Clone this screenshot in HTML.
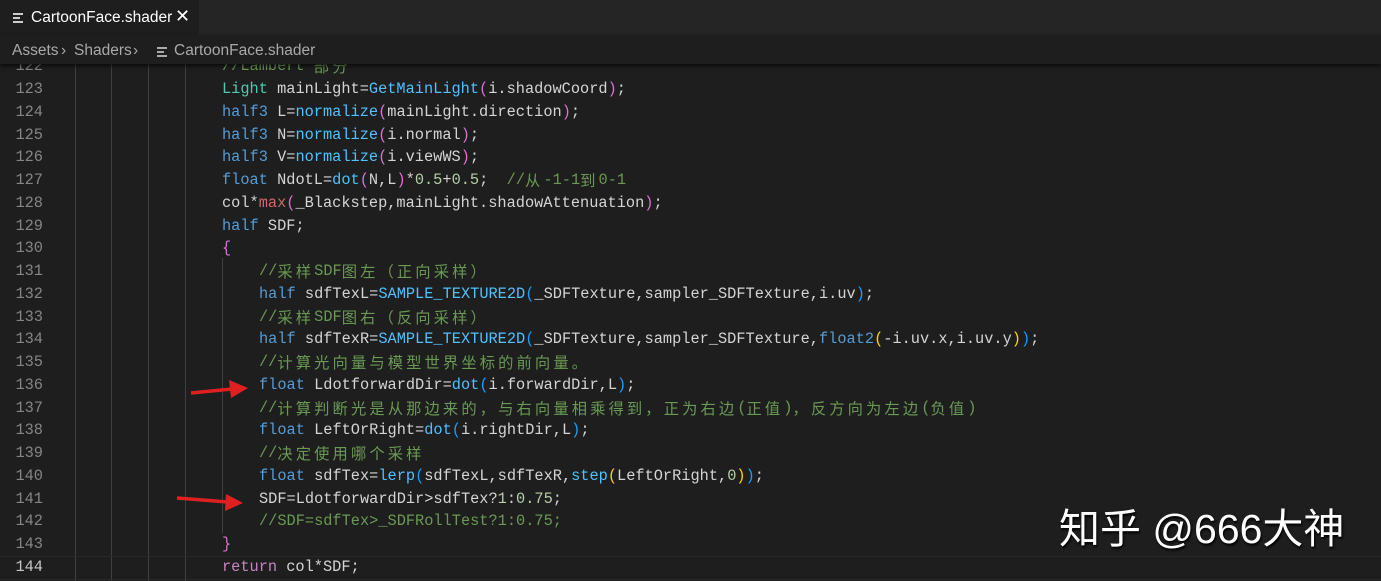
<!DOCTYPE html>
<html><head><meta charset="utf-8"><style>
body{margin:0;width:1381px;height:581px;background:#1e1e1e;overflow:hidden;position:relative;font-family:"Liberation Mono","Noto Sans CJK SC",monospace;}
.tabbar{position:absolute;left:0;top:0;width:1381px;height:35px;background:#252526;}
.tab{position:absolute;left:0;top:0;width:199px;height:35px;background:#1e1e1e;color:#fff;font:15.5px "Liberation Sans",sans-serif;}
.tab span{position:absolute;top:9px}
.bc{position:absolute;left:0;top:35px;width:1381px;height:29px;background:#1e1e1e;color:#a9a9a9;font:15.5px "Liberation Sans",sans-serif;box-shadow:0 2px 4px rgba(0,0,0,.7);z-index:3}
.bc span{position:absolute;top:7px}
.ico{position:absolute;width:10px;height:10px;}
.ico i{display:block;height:2px;background:currentColor;margin-bottom:2px}
.ln{position:absolute;left:0;width:43px;text-align:right;color:#858585;font-size:15.3px;line-height:22px;height:22px}
.cd{position:absolute;white-space:pre;color:#d4d4d4;font-size:15.3px;line-height:22px;height:22px}
.g{position:absolute;top:55px;height:526px;width:1px;background:#404040}
.c{color:#6a9955}.k{color:#569cd6}.t{color:#4ec9b0}.f{color:#4fc1ff}.n{color:#b5cea8}.p{color:#c586c0}.m{color:#d16969}.y{color:#ffd700}.pk{color:#da70d6}.b{color:#179fff}
.z{letter-spacing:3.1px;font-family:"Noto Sans CJK SC",sans-serif;font-size:15.3px;line-height:22px;display:inline-block;height:22px;vertical-align:top}
.wm{position:absolute;left:1059px;top:495px;color:#fff;font:41px "Liberation Sans","Noto Sans CJK SC",sans-serif;text-shadow:1px 2px 2px #000;z-index:5}
</style></head><body>
<div class="tabbar"><div class="tab"><div class="ico" style="left:13px;top:13px;color:#ccc"><i></i><i style="width:7px"></i><i></i></div><span style="left:31px">CartoonFace.shader</span><span style="left:175px;font-size:18px;top:6px">✕</span></div></div>
<div class="bc"><span style="left:12px">Assets</span><span style="left:61px">›</span><span style="left:74px">Shaders</span><span style="left:133px">›</span><div class="ico" style="left:157px;top:12px;color:#aaa"><i></i><i style="width:7px"></i><i></i></div><span style="left:174px">CartoonFace.shader</span></div>
<div class="g" style="left:75px"></div><div class="g" style="left:111px"></div><div class="g" style="left:148px"></div><div class="g" style="left:185px"></div>
<div class="g" style="left:222px;top:258px;height:275px"></div>
<div style="position:absolute;left:0;top:556px;width:1381px;height:22px;border-top:1px solid #282828;border-bottom:1px solid #282828"></div>
<div id="code"></div>
<div class="wm">知乎 @666大神</div>
<svg style="position:absolute;left:0;top:0;z-index:4" width="300" height="581">
<path d="M191 393 L232 389" stroke="#e02020" stroke-width="3.5"/><path d="M248 388 L229 380 L231 398 Z" fill="#e02020"/>
<path d="M177 498 L228 502" stroke="#e02020" stroke-width="3.5"/><path d="M243 503 L226 494 L225 511 Z" fill="#e02020"/>
</svg>
<script>
var L=[
[122,222,'<span class="c">//Lambert <span class="z">部分</span></span>'],
[123,222,'<span class="t">Light</span> mainLight=<span class="f">GetMainLight</span><span class="pk">(</span>i.shadowCoord<span class="pk">)</span>;'],
[124,222,'<span class="k">half3</span> L=<span class="f">normalize</span><span class="pk">(</span>mainLight.direction<span class="pk">)</span>;'],
[125,222,'<span class="k">half3</span> N=<span class="f">normalize</span><span class="pk">(</span>i.normal<span class="pk">)</span>;'],
[126,222,'<span class="k">half3</span> V=<span class="f">normalize</span><span class="pk">(</span>i.viewWS<span class="pk">)</span>;'],
[127,222,'<span class="k">float</span> NdotL=<span class="f">dot</span><span class="pk">(</span>N,L<span class="pk">)</span>*<span class="n">0.5</span>+<span class="n">0.5</span>;  <span class="c">//<span class="z">从</span>-1-1<span class="z">到</span>0-1</span>'],
[128,222,'col*<span class="m">max</span><span class="pk">(</span>_Blackstep,mainLight.shadowAttenuation<span class="pk">)</span>;'],
[129,222,'<span class="k">half</span> SDF;'],
[130,222,'<span class="pk">{</span>'],
[131,259,'<span class="c">//<span class="z">采样</span>SDF<span class="z">图左（正向采样）</span></span>'],
[132,259,'<span class="k">half</span> sdfTexL=<span class="f">SAMPLE_TEXTURE2D</span><span class="b">(</span>_SDFTexture,sampler_SDFTexture,i.uv<span class="b">)</span>;'],
[133,259,'<span class="c">//<span class="z">采样</span>SDF<span class="z">图右（反向采样）</span></span>'],
[134,259,'<span class="k">half</span> sdfTexR=<span class="f">SAMPLE_TEXTURE2D</span><span class="b">(</span>_SDFTexture,sampler_SDFTexture,<span class="k">float2</span><span class="y">(</span>-i.uv.x,i.uv.y<span class="y">)</span><span class="b">)</span>;'],
[135,259,'<span class="c">//<span class="z">计算光向量与模型世界坐标的前向量。</span></span>'],
[136,259,'<span class="k">float</span> LdotforwardDir=<span class="f">dot</span><span class="b">(</span>i.forwardDir,L<span class="b">)</span>;'],
[137,259,'<span class="c">//<span class="z">计算判断光是从那边来的，与右向量相乘得到，正为右边</span>(<span class="z">正值</span>)<span class="z">，反方向为左边</span>(<span class="z">负值</span>)</span>'],
[138,259,'<span class="k">float</span> LeftOrRight=<span class="f">dot</span><span class="b">(</span>i.rightDir,L<span class="b">)</span>;'],
[139,259,'<span class="c">//<span class="z">决定使用哪个采样</span></span>'],
[140,259,'<span class="k">float</span> sdfTex=<span class="f">lerp</span><span class="b">(</span>sdfTexL,sdfTexR,<span class="f">step</span><span class="y">(</span>LeftOrRight,<span class="n">0</span><span class="y">)</span><span class="b">)</span>;'],
[141,259,'SDF=LdotforwardDir&gt;sdfTex?<span class="n">1</span>:<span class="n">0.75</span>;'],
[142,259,'<span class="c">//SDF=sdfTex&gt;_SDFRollTest?1:0.75;</span>'],
[143,222,'<span class="pk">}</span>'],
[144,222,'<span class="p">return</span> col*SDF;']];
var h='';L.forEach(function(r){var top=78+(r[0]-123)*22.76;
h+='<div class="ln" style="top:'+top+'px;'+(r[0]==144?'color:#c6c6c6':'')+'">'+r[0]+'</div><div class="cd" style="left:'+r[1]+'px;top:'+top+'px">'+r[2]+'</div>';});
document.getElementById('code').innerHTML=h;
</script>
</body></html>
